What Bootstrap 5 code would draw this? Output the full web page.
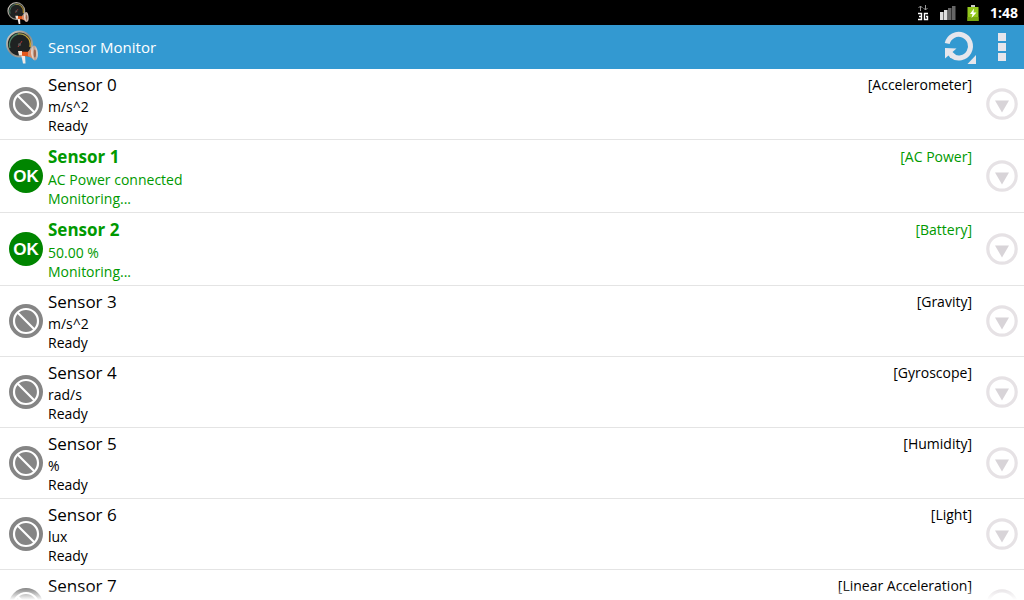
<!DOCTYPE html>
<html lang="en">
<head>
<meta charset="utf-8">
<meta name="viewport" content="width=device-width, initial-scale=1">
<title>Sensor Monitor</title>
<link href="https://cdn.jsdelivr.net/npm/bootstrap@5.3.0/dist/css/bootstrap.min.css" rel="stylesheet">
<style>
  body { font-family: "Open Sans", "Noto Sans", sans-serif; font-size: 14px; line-height: 19px; color: #000; background: #fff; }
  .status-bar { height: 25px; background: #000; padding: 0 6px; }
  .status-icons { gap: 11px; }
  .clock { font-size: 14px; line-height: 24px; font-weight: 700; color: #fff; }
  .app-bar { height: 44px; background: #3399d1; padding: 0 17px 0 4px; }
  .app-title { font-size: 15px; line-height: 22px; font-weight: 400; color: #fff; }
  .app-actions { gap: 20px; }
  .sensor-list { scrollbar-width: none; }
  .sensor-list::-webkit-scrollbar { display: none; }
  .sensor-row { min-height: 71px; padding: 4px 6px 4px 8px; border-bottom: 1px solid #e4e4e4; }
  .sensor-name { font-size: 17px; line-height: 24px; font-weight: 400; }
  .sensor-kind { line-height: 24px; margin-right: 14px; }
  .active-sensor { color: #009900; }
  .active-sensor .sensor-name { font-weight: 700; line-height: 26px; }
  .active-sensor .sensor-kind { line-height: 26px; }
  .state-icon { width: 36px; height: 36px; margin-right: 4px; }
  .fade-edge { height: 12px; background: linear-gradient(rgba(255,255,255,0), #fff); pointer-events: none; }
</style>
</head>
<body class="d-flex flex-column vh-100 overflow-hidden">

<svg width="0" height="0" class="position-absolute" aria-hidden="true">
  <defs>
    <linearGradient id="rim" x1="0" y1="0" x2="1" y2="1">
      <stop offset="0" stop-color="#d8d4cc"/><stop offset=".5" stop-color="#8f8a80"/><stop offset="1" stop-color="#b9b4aa"/>
    </linearGradient>
    <linearGradient id="horn" x1="0" y1="0" x2="1" y2="0">
      <stop offset="0" stop-color="#f6eee8"/><stop offset=".5" stop-color="#b59a8c"/><stop offset="1" stop-color="#e8dcd2"/>
    </linearGradient>
    <symbol id="gauge" viewBox="0 0 36 36">
      <circle cx="15.500" cy="15" r="12.500" fill="#1f2222" stroke="url(#rim)" stroke-width="1.800"/>
      <path d="M6 19A11 11 0 0 1 14 5" fill="none" stroke="#4c8468" stroke-width="1.300"/>
      <path d="M14 5A10.500 10.500 0 0 1 22 7" fill="none" stroke="#a8a04a" stroke-width="1.300"/>
      <path d="M22 7A11 11 0 0 1 26 18" fill="none" stroke="#c8a030" stroke-width="1.500"/>
      <path d="M14 18L18 12" stroke="#a33" stroke-width="1"/>
      <circle cx="15.500" cy="15.500" r="1.500" fill="#555"/>
      <path d="M17 25L21 26L21.500 34.500L19 34.500Z" fill="#f1e9e4"/>
      <path d="M15 22.500L27 23L28 28L16 26.500Z" fill="#e4571b"/>
      <path d="M14 22L18 22L18 26.500L15 26.500Z" fill="#f6e5d8"/>
      <path d="M24 23L30 18L31 31L24 27Z" fill="#d98c66"/>
      <ellipse cx="30.500" cy="24" rx="3.300" ry="7.500" fill="url(#horn)" transform="rotate(-5 30.500 24)"/>
      <ellipse cx="30.800" cy="24.500" rx="1.200" ry="4" fill="#a0674c"/>
    </symbol>
    <symbol id="idle" viewBox="0 0 36 36">
      <circle cx="18" cy="18" r="17" fill="#858585"/>
      <circle cx="18" cy="18" r="12" fill="none" stroke="#fff" stroke-width="2.200"/>
      <path d="M9.500 9.500L26.500 26.500" stroke="#fff" stroke-width="2.200"/>
    </symbol>
    <symbol id="arrow" viewBox="0 0 32 32">
      <circle cx="16" cy="16" r="14.200" fill="#fff" stroke="#e6e2e5" stroke-width="3.200"/>
      <path d="M9 12.500H23L16 24.500Z" fill="#d8d4d8"/>
    </symbol>
  </defs>
</svg>

<header class="flex-shrink-0">
  <div class="status-bar d-flex align-items-center justify-content-between">
    <svg width="24" height="24" aria-hidden="true"><use href="#gauge"/></svg>
    <div class="status-icons d-flex align-items-center">
      <svg width="12" height="17" viewBox="0 0 12 17" role="img" aria-label="3G data" fill="none">
        <path d="M3.500 7V2M1.500 4L3.500 2L5.500 4M8.500 1V6M6.500 4L8.500 6L10.500 4" stroke="#999"/>
        <path d="M1 9.500H4.500V15.500H1M2 12.500H4.500M11 9.500H7.500V15.500H10.500V12.500H9" stroke="#fff" stroke-width="1.400"/>
      </svg>
      <svg width="16" height="15" viewBox="0 0 16 15" role="img" aria-label="Signal strength">
        <path d="M0 7H3.500V15H0ZM4 5H7.500V15H4Z" fill="#ddd"/><path d="M8 3H11.500V15H8ZM12 1H15.500V15H12Z" fill="#666"/>
      </svg>
      <svg width="12" height="16" viewBox="0 0 12 16" role="img" aria-label="Battery charging">
        <path d="M4 0H8V2H11.500V16H.500V2H4Z" fill="#94c81e"/><path d="M4 0H8V2H4Z" fill="#ccc"/><path d="M.500 12H11.500V16H.500Z" fill="#78a812"/>
        <path d="M7 3.500L3 9H5.500L4.500 13L9.500 7.500H6.500Z" fill="#fff"/>
      </svg>
      <span class="clock">1:48</span>
    </div>
  </div>
  <nav class="app-bar d-flex align-items-center" aria-label="Main">
    <svg width="36" height="36" aria-hidden="true"><use href="#gauge"/></svg>
    <h1 class="app-title mb-0 ms-2">Sensor Monitor</h1>
    <div class="app-actions d-flex align-items-center ms-auto">
      <button class="btn p-0 border-0 lh-1" type="button" aria-label="Refresh">
        <svg class="d-block" width="34" height="34" viewBox="0 0 34 34">
          <path d="M4.200 13.500A11.800 11.800 0 1 1 8.500 25.500" fill="none" stroke="#e6e6ec" stroke-width="5"/>
          <path d="M2 18L13.500 18.500L9.500 22L13 25L7.500 28L5.500 25.500L2 28.500Z" fill="#e6e6ec"/>
          <path d="M33 25V34H24.500Z" fill="#e6e6ec"/>
        </svg>
      </button>
      <button class="btn p-0 border-0 lh-1" type="button" aria-label="More options">
        <svg class="d-block" width="10" height="30" viewBox="0 0 10 30"><path d="M1 1H9V9H1ZM1 11H9V19H1ZM1 21H9V29H1Z" fill="#e6e6ec"/></svg>
      </button>
    </div>
  </nav>
</header>

<main class="flex-grow-1 position-relative overflow-hidden">
  <ul class="sensor-list list-unstyled mb-0 h-100 overflow-auto"></ul>
  <div class="fade-edge position-absolute bottom-0 start-0 w-100"></div>
</main>

<script src="https://cdn.jsdelivr.net/npm/bootstrap@5.3.0/dist/js/bootstrap.bundle.min.js"></script>
<script>
  const sensors = [
    ["Accelerometer", "m/s^2", "Ready"],
    ["AC Power", "AC Power connected", "Monitoring..."],
    ["Battery", "50.00 %", "Monitoring..."],
    ["Gravity", "m/s^2", "Ready"],
    ["Gyroscope", "rad/s", "Ready"],
    ["Humidity", "%", "Ready"],
    ["Light", "lux", "Ready"],
    ["Linear Acceleration", "", ""]
  ];
  const idleIcon = '<svg class="state-icon flex-shrink-0" role="img" aria-label="Idle"><use href="#idle"/></svg>';
  const okIcon = '<svg class="state-icon flex-shrink-0" viewBox="0 0 36 36" role="img" aria-label="OK"><circle cx="18" cy="18" r="17" fill="#008500"/><text x="18" y="24" text-anchor="middle" font-family="Liberation Sans, sans-serif" font-weight="700" font-size="17" fill="#fff">OK</text></svg>';
  document.querySelector(".sensor-list").innerHTML = sensors.map(([kind, value, state], i) => {
    const active = state === "Monitoring...";
    return `<li class="sensor-row d-flex align-items-center ${active ? "active-sensor" : ""}">
      ${active ? okIcon : idleIcon}
      <div class="flex-grow-1 align-self-start">
        <h2 class="sensor-name mb-0">Sensor ${i}</h2>
        <div>${value}</div>
        <div>${state}</div>
      </div>
      <span class="sensor-kind align-self-start">[${kind}]</span>
      <button class="btn p-0 border-0 lh-1" type="button" aria-label="Sensor ${i} options"><svg class="d-block" width="32" height="32"><use href="#arrow"/></svg></button>
    </li>`;
  }).join("");
</script>
</body>
</html>
